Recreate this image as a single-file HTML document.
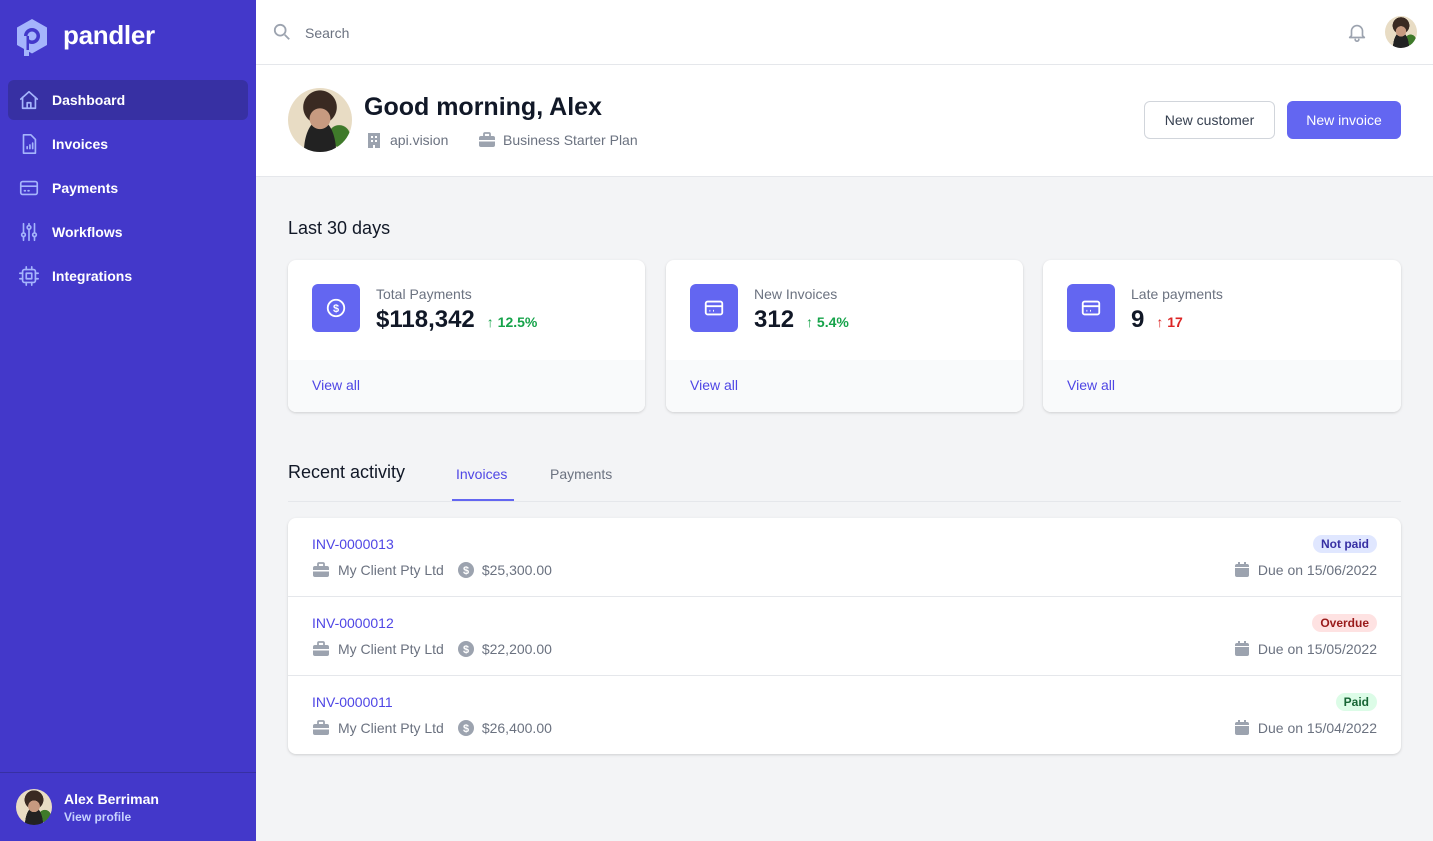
<!DOCTYPE html>
<html><head><meta charset="utf-8"><style>
*{box-sizing:border-box;margin:0;padding:0}
body{width:1433px;height:841px;overflow:hidden;font-family:"Liberation Sans",sans-serif;background:#f3f4f6;position:relative;color:#111827}
.a{position:absolute}
.sb{left:0;top:0;width:256px;height:841px;background:#4338ca}
.nav{left:8px;width:240px;height:40px;border-radius:6px;display:flex;align-items:center;padding-left:10px;color:#fff;font-size:14px;font-weight:bold}
.nav svg{width:22px;height:22px;margin-right:12px;stroke:#a5b4fc;fill:none;stroke-width:1.8;stroke-linecap:round;stroke-linejoin:round}
.av{border-radius:50%;background:radial-gradient(circle at 50% 48%,#c79a80 0 22%,transparent 23%),radial-gradient(circle at 50% 30%,#3a2a22 0 30%,transparent 31%),radial-gradient(ellipse at 50% 100%,#222 0 35%,transparent 36%),radial-gradient(circle at 80% 75%,#3f7a2a 0 15%,transparent 16%),#e8dcc4;overflow:hidden}
.card{background:#fff;border-radius:8px;box-shadow:0 1px 3px rgba(0,0,0,.1),0 1px 2px rgba(0,0,0,.06);overflow:hidden}
.ic{left:24px;top:24px;width:48px;height:48px;background:#6366f1;border-radius:6px;display:flex;align-items:center;justify-content:center}
.lbl{left:88px;top:26px;font-size:14px;color:#6b7280}
.val{left:88px;top:46px;font-size:24px;font-weight:bold;color:#111827;display:flex;align-items:baseline}
.val span{font-size:14px;margin-left:12px}
.foot{left:0;top:100px;width:100%;height:52px;background:#f9fafb;padding:17px 24px;font-size:14px;color:#4f46e5}
.row{position:absolute;left:0;width:100%;height:79px;border-bottom:1px solid #e5e7eb}
.id{position:absolute;left:24px;top:18px;font-size:14px;color:#4f46e5}
.meta{position:absolute;left:24px;top:44px;font-size:14px;color:#6b7280;display:flex;align-items:center}
.due{position:absolute;right:24px;top:44px;font-size:14px;color:#6b7280;display:flex;align-items:center}
.bd{position:absolute;right:24px;top:17px;font-size:12px;font-weight:bold;padding:2px 8px;border-radius:10px}
</style></head><body>
<div class="a sb">
  <svg class="a" style="left:15px;top:18px" width="34" height="40" viewBox="0 0 34 40"><path d="M17 1 L32 9.5 V27 L17 35.5 L2 27 V9.5Z" fill="#a5b4fc"/><circle cx="17" cy="18" r="8" fill="#4338ca"/><circle cx="17" cy="18" r="4.5" fill="#a5b4fc"/><rect x="9" y="18" width="5" height="20" fill="#a5b4fc"/><rect x="11.5" y="18" width="2.5" height="14" fill="#4338ca"/></svg>
  <div class="a" style="left:63px;top:20px;font-size:26px;font-weight:bold;color:#fff;letter-spacing:-.3px">pandler</div>
  <div class="a nav" style="top:80px;background:#3730a3"><svg viewBox="0 0 24 24"><path d="M3 11l9-8 9 8M5 9v12h14V9M10 21v-6h4v6"/></svg>Dashboard</div>
  <div class="a nav" style="top:124px"><svg viewBox="0 0 24 24"><path d="M6 2h8l5 5v15H6z M10 17v-2 M13 17v-4 M16 17v-6"/></svg>Invoices</div>
  <div class="a nav" style="top:168px"><svg viewBox="0 0 24 24"><rect x="3" y="5" width="18" height="14" rx="2"/><path d="M3 10h18M7 15h1M11 15h1"/></svg>Payments</div>
  <div class="a nav" style="top:212px"><svg viewBox="0 0 24 24"><path d="M6 3v10M6 17v4M12 3v2M12 9v12M18 3v10M18 17v4"/><circle cx="6" cy="15" r="2"/><circle cx="12" cy="7" r="2"/><circle cx="18" cy="15" r="2"/></svg>Workflows</div>
  <div class="a nav" style="top:256px"><svg viewBox="0 0 24 24"><rect x="5" y="5" width="14" height="14" rx="2"/><rect x="9" y="9" width="6" height="6"/><path d="M9 2v3M15 2v3M9 19v3M15 19v3M2 9h3M2 15h3M19 9h3M19 15h3"/></svg>Integrations</div>
  <div class="a" style="left:0;top:772px;width:256px;border-top:1px solid #3730a3"></div>
  <div class="a av" style="left:16px;top:789px;width:36px;height:36px"></div>
  <div class="a" style="left:64px;top:791px;font-size:14px;font-weight:bold;color:#fff">Alex Berriman</div>
  <div class="a" style="left:64px;top:810px;font-size:12px;font-weight:bold;color:#c7d2fe">View profile</div>
</div>
<div class="a" style="left:256px;top:0;width:1177px;height:65px;background:#fff;border-bottom:1px solid #e5e7eb"></div>
<svg class="a" style="left:273px;top:23px" width="18" height="18" viewBox="0 0 20 20" fill="none" stroke="#9ca3af" stroke-width="2"><circle cx="8" cy="8" r="6"/><path d="M13 13l5 5"/></svg>
<div class="a" style="left:305px;top:25px;font-size:14px;color:#6b7280">Search</div>
<svg class="a" style="left:1346px;top:21px" width="22" height="22" viewBox="0 0 24 24" fill="none" stroke="#9ca3af" stroke-width="1.8" stroke-linecap="round" stroke-linejoin="round"><path d="M18 16V11a6 6 0 0 0-12 0v5l-2 2h16z M10 20a2 2 0 0 0 4 0"/></svg>
<div class="a av" style="left:1385px;top:16px;width:32px;height:32px"></div>
<div class="a" style="left:256px;top:65px;width:1177px;height:112px;background:#fff;border-bottom:1px solid #e5e7eb"></div>
<div class="a av" style="left:288px;top:88px;width:64px;height:64px"></div>
<div class="a" style="left:364px;top:93px;font-size:25px;font-weight:bold;color:#111827">Good morning, Alex</div>
<svg class="a" style="left:367px;top:132px" width="14" height="16" viewBox="0 0 14 16"><path d="M1 1h12v15H8v-3H6v3H1z" fill="#9ca3af"/><rect x="4" y="4" width="2" height="2" fill="#fff"/><rect x="8" y="4" width="2" height="2" fill="#fff"/><rect x="4" y="8" width="2" height="2" fill="#fff"/><rect x="8" y="8" width="2" height="2" fill="#fff"/></svg>
<div class="a" style="left:390px;top:132px;font-size:14px;color:#6b7280">api.vision</div>
<svg class="a" style="left:478px;top:132px" width="18" height="16" viewBox="0 0 18 16"><rect x="6" y="1" width="6" height="4" rx="1" fill="none" stroke="#9ca3af" stroke-width="1.8"/><rect x="1" y="4" width="16" height="11" rx="2" fill="#9ca3af"/><rect x="1" y="8" width="16" height="1.5" fill="#fff"/></svg>
<div class="a" style="left:503px;top:132px;font-size:14px;color:#6b7280">Business Starter Plan</div>
<div class="a" style="left:1144px;top:101px;width:131px;height:38px;border:1px solid #d1d5db;border-radius:6px;background:#fff;font-size:14px;color:#374151;display:flex;align-items:center;justify-content:center">New customer</div>
<div class="a" style="left:1287px;top:101px;width:114px;height:38px;border-radius:6px;background:#6366f1;font-size:14px;color:#fff;display:flex;align-items:center;justify-content:center">New invoice</div>
<div class="a" style="left:288px;top:218px;font-size:18px;color:#111827">Last 30 days</div>

<div class="a card" style="left:288px;top:260px;width:357px;height:152px">
  <div class="a ic"><svg width="22" height="22" viewBox="0 0 24 24"><circle cx="12" cy="12" r="9" fill="none" stroke="#fff" stroke-width="2"/><text x="12" y="16.5" text-anchor="middle" font-size="12" font-weight="bold" fill="#fff" font-family="Liberation Sans">$</text></svg></div>
  <div class="a lbl">Total Payments</div>
  <div class="a val">$118,342<span style="color:#16a34a">↑ 12.5%</span></div>
  <div class="a foot">View all</div>
</div>
<div class="a card" style="left:666px;top:260px;width:357px;height:152px">
  <div class="a ic"><svg width="22" height="22" viewBox="0 0 24 24" fill="none" stroke="#fff" stroke-width="2"><rect x="3" y="5" width="18" height="14" rx="2"/><path d="M3 10h18M7 15h1M11 15h1"/></svg></div>
  <div class="a lbl">New Invoices</div>
  <div class="a val">312<span style="color:#16a34a">↑ 5.4%</span></div>
  <div class="a foot">View all</div>
</div>
<div class="a card" style="left:1043px;top:260px;width:358px;height:152px">
  <div class="a ic"><svg width="22" height="22" viewBox="0 0 24 24" fill="none" stroke="#fff" stroke-width="2"><rect x="3" y="5" width="18" height="14" rx="2"/><path d="M3 10h18M7 15h1M11 15h1"/></svg></div>
  <div class="a lbl">Late payments</div>
  <div class="a val">9<span style="color:#dc2626">↑ 17</span></div>
  <div class="a foot">View all</div>
</div>

<div class="a" style="left:288px;top:462px;font-size:18px;color:#111827">Recent activity</div>
<div class="a" style="left:456px;top:466px;font-size:14px;color:#4f46e5">Invoices</div>
<div class="a" style="left:550px;top:466px;font-size:14px;color:#6b7280">Payments</div>
<div class="a" style="left:288px;top:501px;width:1113px;border-top:1px solid #e5e7eb"></div>
<div class="a" style="left:452px;top:499px;width:62px;height:2px;background:#6366f1"></div>

<div class="a card" style="left:288px;top:518px;width:1113px;height:236px">
<div class="row" style="top:0">
  <div class="id">INV-0000013</div>
  <div class="meta"><svg width="18" height="16" viewBox="0 0 18 16"><rect x="6" y="1" width="6" height="4" rx="1" fill="none" stroke="#9ca3af" stroke-width="1.8"/><rect x="1" y="4" width="16" height="11" rx="2" fill="#9ca3af"/><rect x="1" y="8" width="16" height="1.5" fill="#fff"/></svg><span style="margin:0 14px 0 8px">My Client Pty Ltd</span><svg width="16" height="16" viewBox="0 0 16 16"><circle cx="8" cy="8" r="8" fill="#9ca3af"/><text x="8" y="12" text-anchor="middle" font-size="11" font-weight="bold" fill="#fff" font-family="Liberation Sans">$</text></svg><span style="margin-left:8px">$25,300.00</span></div>
  <div class="bd" style="background:#e0e7ff;color:#3730a3">Not paid</div>
  <div class="due"><svg width="16" height="16" viewBox="0 0 16 16" style="margin-right:8px"><rect x="1" y="2" width="14" height="13" rx="2" fill="#9ca3af"/><rect x="4" y="0" width="2" height="4" fill="#9ca3af"/><rect x="10" y="0" width="2" height="4" fill="#9ca3af"/><rect x="1" y="5" width="14" height="1" fill="#fff"/></svg>Due on 15/06/2022</div>
</div>
<div class="row" style="top:79px">
  <div class="id">INV-0000012</div>
  <div class="meta"><svg width="18" height="16" viewBox="0 0 18 16"><rect x="6" y="1" width="6" height="4" rx="1" fill="none" stroke="#9ca3af" stroke-width="1.8"/><rect x="1" y="4" width="16" height="11" rx="2" fill="#9ca3af"/><rect x="1" y="8" width="16" height="1.5" fill="#fff"/></svg><span style="margin:0 14px 0 8px">My Client Pty Ltd</span><svg width="16" height="16" viewBox="0 0 16 16"><circle cx="8" cy="8" r="8" fill="#9ca3af"/><text x="8" y="12" text-anchor="middle" font-size="11" font-weight="bold" fill="#fff" font-family="Liberation Sans">$</text></svg><span style="margin-left:8px">$22,200.00</span></div>
  <div class="bd" style="background:#fee2e2;color:#991b1b">Overdue</div>
  <div class="due"><svg width="16" height="16" viewBox="0 0 16 16" style="margin-right:8px"><rect x="1" y="2" width="14" height="13" rx="2" fill="#9ca3af"/><rect x="4" y="0" width="2" height="4" fill="#9ca3af"/><rect x="10" y="0" width="2" height="4" fill="#9ca3af"/><rect x="1" y="5" width="14" height="1" fill="#fff"/></svg>Due on 15/05/2022</div>
</div>
<div class="row" style="top:158px;border-bottom:none">
  <div class="id">INV-0000011</div>
  <div class="meta"><svg width="18" height="16" viewBox="0 0 18 16"><rect x="6" y="1" width="6" height="4" rx="1" fill="none" stroke="#9ca3af" stroke-width="1.8"/><rect x="1" y="4" width="16" height="11" rx="2" fill="#9ca3af"/><rect x="1" y="8" width="16" height="1.5" fill="#fff"/></svg><span style="margin:0 14px 0 8px">My Client Pty Ltd</span><svg width="16" height="16" viewBox="0 0 16 16"><circle cx="8" cy="8" r="8" fill="#9ca3af"/><text x="8" y="12" text-anchor="middle" font-size="11" font-weight="bold" fill="#fff" font-family="Liberation Sans">$</text></svg><span style="margin-left:8px">$26,400.00</span></div>
  <div class="bd" style="background:#dcfce7;color:#166534">Paid</div>
  <div class="due"><svg width="16" height="16" viewBox="0 0 16 16" style="margin-right:8px"><rect x="1" y="2" width="14" height="13" rx="2" fill="#9ca3af"/><rect x="4" y="0" width="2" height="4" fill="#9ca3af"/><rect x="10" y="0" width="2" height="4" fill="#9ca3af"/><rect x="1" y="5" width="14" height="1" fill="#fff"/></svg>Due on 15/04/2022</div>
</div>
</div>
</body></html>
